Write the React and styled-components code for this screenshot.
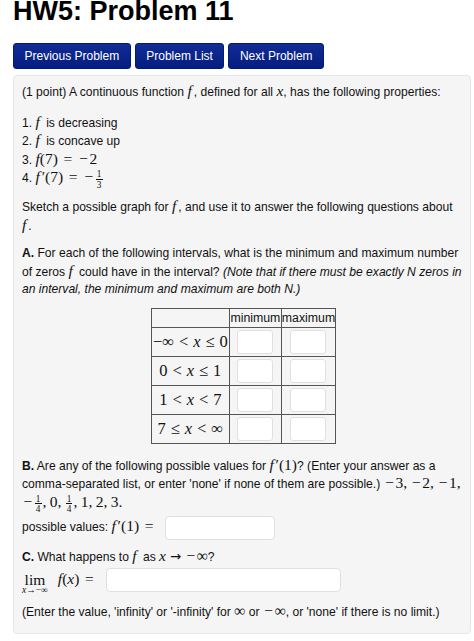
import React from 'react';
import styled, { createGlobalStyle } from 'styled-components';

const Global = createGlobalStyle`
  html, body { margin: 0; padding: 0; background: #fff; }
  body {
    font-family: "Liberation Sans", Arial, Helvetica, sans-serif;
    color: #111;
  }
`;

const Page = styled.div`
  padding: 0 3px 0 13px;
  margin-top: -4px;
`;

const Title = styled.h1`
  margin: 0;
  font-size: 27px;
  line-height: 30px;
  font-weight: bold;
  color: #000;
`;

const NavBar = styled.div`
  display: flex;
  gap: 4px;
  margin-top: 17px;
`;

const NavButton = styled.button`
  height: 26px;
  padding: 0 10.5px;
  border: 1px solid #031a78;
  border-radius: 3px;
  background: linear-gradient(to bottom, #112c96, #041d80);
  color: #fff;
  font-family: "Liberation Sans", Arial, sans-serif;
  font-size: 12px;
  cursor: pointer;
`;

const Well = styled.div`
  margin-top: 6px;
  background: #f5f5f5;
  border: 1px solid #e6e6e6;
  border-radius: 4px;
  padding: 7px 5px 12px 8px;
  font-size: 12.1px;
  line-height: 17.5px;
`;

const Para = styled.p`
  margin: 0 0 ${p => p.$mb || '12px'};
`;

const List = styled.ol`
  margin: 0 0 10px;
  padding: 0;
  list-style: decimal inside;
`;

const Item = styled.li`
  line-height: 17.5px;
`;

const M = styled.span`
  font-family: "Liberation Serif", "Times New Roman", serif;
  font-size: 15.5px;
  line-height: 1;
  white-space: nowrap;
`;

const V = styled.i`
  font-style: italic;
  padding-right: ${p => p.$pad || '0'};
`;

const Rel = styled.span`
  margin: 0 ${p => p.$sp || '0.36em'};
`;

const Arrow = styled.span`
  font-family: "DejaVu Sans", sans-serif;
  font-size: 0.85em;
  margin: 0 0.3em;
`;

const Minus = styled.span`
  padding: 0 0.1em;
`;

const Prime = styled.span`
  padding-left: 0.12em;
`;

const Frac = styled.span`
  display: inline-flex;
  flex-direction: column;
  align-items: center;
  vertical-align: 5px;
  font-size: 9.3px;
  margin: 0 1px;
`;

const Num = styled.span`
  line-height: 6.5px;
  border-bottom: 1px solid currentColor;
  padding: 0 1px 1px;
`;

const Den = styled.span`
  line-height: 6.5px;
  padding-top: 2px;
`;

const Table = styled.table`
  margin: 0 auto 13px;
  border-collapse: collapse;
  background: #f5f5f5;
`;

const HeadCell = styled.th`
  border: 1px solid #555;
  font-weight: normal;
  font-size: 12.3px;
  height: 18px;
  padding: 0;
  line-height: 18px;
  width: ${p => p.$w};
`;

const RowHead = styled.td`
  border: 1px solid #555;
  height: 28px;
  padding: 0;
  text-align: center;
  font-family: "Liberation Serif", "Times New Roman", serif;
  font-size: 16.5px;
  white-space: nowrap;
`;

const Cell = styled.td`
  border: 1px solid #555;
  padding: 0;
  text-align: center;
  vertical-align: middle;
`;

const SmallInput = styled.input`
  box-sizing: border-box;
  width: 36px;
  height: 24px;
  border: 1px solid #e0e0e0;
  border-radius: 3px;
  background: #fff;
  display: block;
  margin: 0 auto;
  padding: 0;
`;

const AnswerInput = styled.input`
  box-sizing: border-box;
  width: ${p => p.$w};
  height: 24px;
  border: 1px solid #e0e0e0;
  border-radius: 4px;
  background: #fff;
  padding: 0 6px;
  margin-left: ${p => p.$ml || '0'};
  margin-top: ${p => p.$mt || '0'};
  flex: none;
`;

const AnswerRow = styled.div`
  display: flex;
  align-items: center;
  margin: 3px 0 8px;
`;

const LimRow = styled.div`
  display: flex;
  align-items: flex-start;
  margin: 5px 0 8px;
`;

const LimCol = styled.span`
  display: inline-flex;
  flex-direction: column;
  align-items: center;
  font-family: "Liberation Serif", "Times New Roman", serif;
  font-size: 15.5px;
  line-height: 17.5px;
`;

const LimSub = styled.span`
  font-size: 9.5px;
  line-height: 9px;
  margin-top: -3px;
`;

const LimFx = styled.span`
  margin-left: 10px;
  line-height: 17.5px;
`;

const rows = [
  <><span>−∞</span><Rel $sp="0.3em">&lt;</Rel><V>x</V><Rel $sp="0.3em">≤</Rel><span>0</span></>,
  <><span>0</span><Rel $sp="0.3em">&lt;</Rel><V>x</V><Rel $sp="0.3em">≤</Rel><span>1</span></>,
  <><span>1</span><Rel $sp="0.3em">&lt;</Rel><V>x</V><Rel $sp="0.3em">&lt;</Rel><span>7</span></>,
  <><span>7</span><Rel $sp="0.3em">≤</Rel><V>x</V><Rel $sp="0.3em">&lt;</Rel><span>∞</span></>,
];

export default function App() {
  return (
    <Page>
      <Global />
      <Title>HW5: Problem 11</Title>
      <NavBar>
        <NavButton>Previous Problem</NavButton>
        <NavButton>Problem List</NavButton>
        <NavButton>Next Problem</NavButton>
      </NavBar>
      <Well>
        <Para>
          (1 point) A continuous function <M><V $pad="2px">f</V></M>, defined for all <M><V>x</V></M>, has the following properties:
        </Para>
        <List>
          <Item><M><V $pad="3px">f</V></M> is decreasing</Item>
          <Item><M><V $pad="3px">f</V></M> is concave up</Item>
          <Item><M><V>f</V>(7)<Rel>=</Rel><Minus>−</Minus>2</M></Item>
          <Item><M><V>f</V><Prime>′</Prime>(7)<Rel>=</Rel><Minus>−</Minus><Frac><Num>1</Num><Den>3</Den></Frac></M></Item>
        </List>
        <Para $mb="10px">
          Sketch a possible graph for <M><V $pad="2px">f</V></M>, and use it to answer the following questions about <M><V $pad="2px">f</V></M>.
        </Para>
        <Para $mb="9px">
          <b>A.</b> For each of the following intervals, what is the minimum and maximum number of zeros <M><V $pad="3px">f</V></M> could have in the interval? <i>(Note that if there must be exactly N zeros in an interval, the minimum and maximum are both N.)</i>
        </Para>
        <Table>
          <thead>
            <tr>
              <HeadCell $w="77px"></HeadCell>
              <HeadCell $w="51px">minimum</HeadCell>
              <HeadCell $w="52px">maximum</HeadCell>
            </tr>
          </thead>
          <tbody>
            {rows.map((r, i) => (
              <tr key={i}>
                <RowHead>{r}</RowHead>
                <Cell><SmallInput aria-label={`minimum ${i + 1}`} /></Cell>
                <Cell><SmallInput aria-label={`maximum ${i + 1}`} /></Cell>
              </tr>
            ))}
          </tbody>
        </Table>
        <Para $mb="0">
          <b>B.</b> Are any of the following possible values for <M><V>f</V><Prime>′</Prime>(1)</M>? (Enter your answer as a comma-separated list, or enter 'none' if none of them are possible.) <M><Minus>−</Minus>3,</M> <M><Minus>−</Minus>2,</M> <M><Minus>−</Minus>1,</M> <M><Minus>−</Minus><Frac><Num>1</Num><Den>4</Den></Frac>,</M> <M>0,</M> <M><Frac><Num>1</Num><Den>4</Den></Frac>,</M> <M>1,</M> <M>2,</M> <M>3.</M>
        </Para>
        <AnswerRow>
          <span>possible values: <M><V>f</V><Prime>′</Prime>(1)<Rel>=</Rel></M></span>
          <AnswerInput $w="110px" $ml="6px" aria-label="possible values" />
        </AnswerRow>
        <Para $mb="0">
          <b>C.</b> What happens to <M><V $pad="3px">f</V></M> as <M><V>x</V><Arrow>→</Arrow><Minus>−</Minus>∞</M>?
        </Para>
        <LimRow>
          <LimCol>
            <span>lim</span>
            <LimSub><V>x</V>→−∞</LimSub>
          </LimCol>
          <LimFx><M><V>f</V>(<V>x</V>)<Rel>=</Rel></M></LimFx>
          <AnswerInput $w="235px" $ml="7px" $mt="-3px" aria-label="limit" />
        </LimRow>
        <Para $mb="0">
          (Enter the value, 'infinity' or '-infinity' for <M>∞</M> or <M><Minus>−</Minus>∞</M>, or 'none' if there is no limit.)
        </Para>
      </Well>
    </Page>
  );
}
